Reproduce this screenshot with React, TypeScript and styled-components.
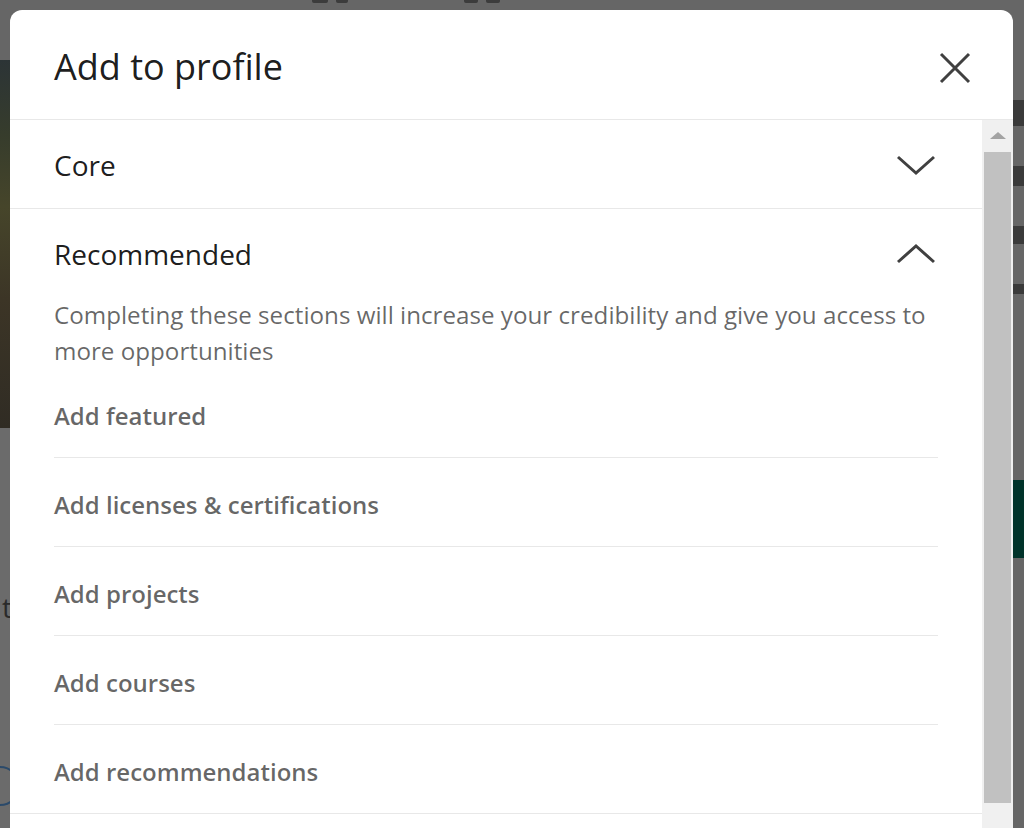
import styled, { createGlobalStyle } from "styled-components"

const GlobalStyle = createGlobalStyle`
  html, body {
    margin: 0;
    padding: 0;
  }
  body {
    font-family: "Open Sans", "Noto Sans", sans-serif;
    overflow: hidden;
  }
  * {
    box-sizing: border-box;
  }
`

const recommended = [
    "Add featured",
    "Add licenses & certifications",
    "Add projects",
    "Add courses",
    "Add recommendations",
]

const ChevronDown = () => (
    <svg width="40" height="24" viewBox="0 0 40 24" fill="none">
        <path d="M2 4 L20 20 L38 4" stroke="#404040" strokeWidth="3" />
    </svg>
)

const ChevronUp = () => (
    <svg width="40" height="24" viewBox="0 0 40 24" fill="none">
        <path d="M2 20 L20 4 L38 20" stroke="#404040" strokeWidth="3" />
    </svg>
)

const CloseIcon = () => (
    <svg width="32" height="32" viewBox="0 0 32 32" fill="none">
        <path d="M2 2 L30 30 M30 2 L2 30" stroke="#404040" strokeWidth="3" />
    </svg>
)

export default function App() {
    return (
        <Page>
            <GlobalStyle />
            <TopStrip>
                <NavMark $w={16} />
                <NavMark $w={12} />
                <NavGap />
                <NavMark $w={14} />
                <NavMark $w={14} />
            </TopStrip>
            <PageBody>
                <LeftColumn>
                    <Cover />
                    <BehindCard>
                        <BehindText>t</BehindText>
                        <BehindRing />
                    </BehindCard>
                </LeftColumn>
                <RightColumn>
                    <DarkMark $h={26} />
                    <DarkMark $h={20} />
                    <DarkMark $h={18} />
                    <DarkMark $h={10} />
                    <GreenBlock />
                </RightColumn>
            </PageBody>

            <Modal role="dialog">
                <Header>
                    <Title>Add to profile</Title>
                    <CloseButton aria-label="Dismiss">
                        <CloseIcon />
                    </CloseButton>
                </Header>
                <Body>
                    <Sections>
                        <Section>
                            <SectionHeader>
                                <SectionTitle>Core</SectionTitle>
                                <ChevronDown />
                            </SectionHeader>
                        </Section>
                        <Section>
                            <SectionHeader>
                                <SectionTitle>Recommended</SectionTitle>
                                <ChevronUp />
                            </SectionHeader>
                            <Description>
                                Completing these sections will increase your credibility and give you access to more opportunities
                            </Description>
                            <ItemList>
                                {recommended.map((item) => (
                                    <Item key={item}>{item}</Item>
                                ))}
                            </ItemList>
                        </Section>
                    </Sections>
                    <Scrollbar>
                        <ScrollArrow />
                        <ScrollThumb />
                    </Scrollbar>
                </Body>
            </Modal>
        </Page>
    )
}

const Page = styled.div`
    position: relative;
    width: 1024px;
    height: 828px;
    overflow: hidden;
    background: #666666;
`

const TopStrip = styled.div`
    display: flex;
    gap: 8px;
    height: 10px;
    padding-left: 312px;
`

const NavMark = styled.span<{ $w: number }>`
    width: ${(p) => p.$w}px;
    height: 3px;
    background: #3c3c3c;
    border-radius: 0 0 2px 2px;
`

const NavGap = styled.span`
    width: 100px;
`

const PageBody = styled.div`
    display: flex;
    justify-content: space-between;
`

const LeftColumn = styled.div`
    width: 40px;
    padding-top: 50px;
`

const Cover = styled.div`
    height: 368px;
    background: linear-gradient(180deg, #2c3436 0%, #363c2c 20%, #46452a 40%, #3c3526 65%, #302c24 100%);
`

const BehindCard = styled.div`
    height: 400px;
    background: #6b6b6b;
    padding-top: 160px;
`

const BehindText = styled.div`
    font-family: "Open Sans", sans-serif;
    font-size: 28px;
    color: #2a2a2a;
    padding-left: 2px;
`

const BehindRing = styled.div`
    width: 40px;
    height: 40px;
    margin: 140px 0 0 -20px;
    border: 2px solid #2b4a6a;
    border-radius: 50%;
`

const RightColumn = styled.div`
    width: 30px;
    display: flex;
    flex-direction: column;
    gap: 40px;
    padding-top: 90px;
`

const DarkMark = styled.span<{ $h: number }>`
    height: ${(p) => p.$h}px;
    background: #3a3a3a;
`

const GreenBlock = styled.div`
    height: 78px;
    margin-top: 146px;
    background: #00332a;
    border-radius: 16px 0 0 0;
`

const Modal = styled.div`
    position: absolute;
    top: 10px;
    left: 10px;
    width: 1003px;
    height: 840px;
    display: flex;
    flex-direction: column;
    background: #ffffff;
    border-radius: 12px 12px 0 0;
    overflow: hidden;
`

const Header = styled.header`
    display: flex;
    align-items: center;
    justify-content: space-between;
    flex-shrink: 0;
    height: 110px;
    padding: 3px 42px 0 44px;
    border-bottom: 1px solid #e8e8e8;
`

const Title = styled.h2`
    margin: 0;
    font-size: 36px;
    font-weight: 400;
    color: rgba(0, 0, 0, 0.9);
`

const CloseButton = styled.button`
    display: flex;
    margin-top: 4px;
    padding: 0;
    border: 0;
    background: none;
    cursor: pointer;
`

const Body = styled.div`
    display: flex;
    flex: 1;
    min-height: 0;
`

const Sections = styled.div`
    flex: 1;
`

const Section = styled.section`
    padding: 0 44px;
    border-bottom: 1px solid #e8e8e8;
`

const SectionHeader = styled.div`
    display: flex;
    align-items: center;
    justify-content: space-between;
    height: 88px;
    padding-top: 2px;
    margin-right: 2px;
`

const SectionTitle = styled.h3`
    margin: 0;
    font-size: 28px;
    font-weight: 500;
    color: rgba(0, 0, 0, 0.9);
`

const Description = styled.p`
    margin: 0;
    font-size: 24.2px;
    line-height: 36px;
    color: rgba(0, 0, 0, 0.6);
`

const ItemList = styled.ul`
    margin: 0;
    padding: 0;
    list-style: none;
`

const Item = styled.li`
    display: flex;
    align-items: center;
    height: 88px;
    padding-top: 4px;
    font-size: 24px;
    font-weight: 600;
    color: rgba(0, 0, 0, 0.6);

    & + & {
        height: 89px;
        border-top: 1px solid #e8e8e8;
    }
`

const Scrollbar = styled.div`
    display: flex;
    flex-direction: column;
    flex-shrink: 0;
    width: 31px;
    background: #f0f0f0;
`

const ScrollArrow = styled.div`
    display: flex;
    align-items: center;
    justify-content: center;
    height: 31px;

    &::before {
        content: "";
        border-left: 8px solid transparent;
        border-right: 8px solid transparent;
        border-bottom: 7px solid #a3a3a3;
    }
`

const ScrollThumb = styled.div`
    height: 651px;
    margin: 1px 2px 0 2px;
    background: #c1c1c1;
`
